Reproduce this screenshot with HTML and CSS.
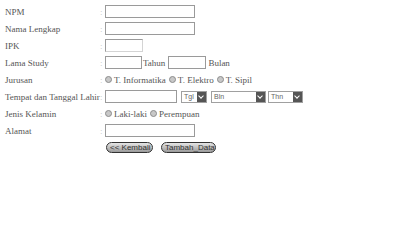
FILE: index.html
```html
<!DOCTYPE html>
<html lang="id">
<head>
    <meta charset="UTF-8">
    <title>Input Data Mahasiswa</title>
    <link rel="stylesheet" href="styles.css">
</head>
<body>
    <form class="form-mhs">
        <div class="label">NPM</div>
        <div class="colon">:</div>
        <div class="field"><span class="textbox w90"></span></div>

        <div class="label">Nama Lengkap</div>
        <div class="colon">:</div>
        <div class="field"><span class="textbox w90"></span></div>

        <div class="label">IPK</div>
        <div class="colon">:</div>
        <div class="field"><span class="textbox w38 inset"></span></div>

        <div class="label">Lama Study</div>
        <div class="colon">:</div>
        <div class="field">
            <span class="textbox w37"></span><span class="word">Tahun</span><span class="textbox w38"></span><span class="word gap">Bulan</span>
        </div>

        <div class="label">Jurusan</div>
        <div class="colon">:</div>
        <div class="field">
            <span class="radio"></span><span class="word">T. Informatika</span>
            <span class="radio"></span><span class="word">T. Elektro</span>
            <span class="radio"></span><span class="word">T. Sipil</span>
        </div>

        <div class="label">Tempat dan Tanggal Lahir</div>
        <div class="colon">:</div>
        <div class="field">
            <span class="textbox w72"></span>
            <span class="select s-tgl"><span class="opt">Tgl</span><span class="arrow"></span></span>
            <span class="select s-bln"><span class="opt">Bln</span><span class="arrow"></span></span>
            <span class="select s-thn"><span class="opt">Thn</span><span class="arrow"></span></span>
        </div>

        <div class="label">Jenis Kelamin</div>
        <div class="colon">:</div>
        <div class="field">
            <span class="radio"></span><span class="word">Laki-laki</span>
            <span class="radio"></span><span class="word">Perempuan</span>
        </div>

        <div class="label">Alamat</div>
        <div class="colon">:</div>
        <div class="field"><span class="textbox w90"></span></div>

        <div class="label"></div>
        <div class="colon"></div>
        <div class="field buttons">
            <span class="btn b-kembali">&lt;&lt; Kembali</span>
            <span class="btn b-tambah">Tambah_Data</span>
        </div>
    </form>
</body>
</html>
```

FILE: styles.css
```css
* {
    margin: 0;
    padding: 0;
    box-sizing: border-box;
}

body {
    background: #ffffff;
    color: #555;
    font-family: 'Liberation Serif', 'Times New Roman', serif;
    font-size: 9px;
    width: 400px;
    height: 225px;
    overflow: hidden;
}

.form-mhs {
    display: grid;
    grid-template-columns: 95px 5px auto;
    grid-auto-rows: 17px;
    align-items: center;
    padding: 3px 0 0 5px;
}

.label {
    white-space: nowrap;
}

.colon {
    color: #c4c4c4;
}

.field {
    display: flex;
    align-items: center;
    white-space: nowrap;
}

.textbox {
    display: inline-block;
    height: 13px;
    border: 1px solid #9a9a9a;
    background: #fff;
}

.textbox.inset {
    border-color: #9a9a9a #d4d4d4 #d4d4d4 #9a9a9a;
}

.w90 { width: 90px; }
.w72 { width: 72px; }
.w38 { width: 38px; }
.w37 { width: 37px; }

.word {
    margin: 0 3px 0 1px;
}

.word.gap {
    margin-left: 2px;
}

.radio {
    display: inline-block;
    width: 7px;
    height: 7px;
    border-radius: 50%;
    background: #c8c8c8;
    border: 1px solid #8c8c8c;
    margin-right: 1px;
}

.select {
    display: inline-flex;
    align-items: center;
    height: 12px;
    border: 1px solid #a0a0a0;
    background: #fff;
    margin-left: 4px;
    font-family: 'Liberation Sans', Arial, sans-serif;
    font-size: 7px;
    color: #666;
}

.select .opt {
    flex: 1;
    padding-left: 2px;
}

.select .arrow {
    width: 9px;
    height: 10px;
    background: #555;
    position: relative;
}

.select .arrow::after {
    content: '';
    position: absolute;
    left: 2px;
    top: 2px;
    width: 3px;
    height: 3px;
    border-right: 1px solid #fff;
    border-bottom: 1px solid #fff;
    transform: rotate(45deg);
}

.s-tgl { width: 26px; }
.s-bln { width: 55px; margin-left: 4px; }
.s-thn { width: 35px; margin-left: 2px; }

.buttons {
    padding-left: 1px;
}

.btn {
    display: inline-block;
    height: 11px;
    line-height: 9px;
    padding: 0 3px;
    border: 1px solid #333;
    border-radius: 6px;
    background: linear-gradient(to bottom, #e6e6e6, #9a9a9a);
    font-family: 'Liberation Sans', Arial, sans-serif;
    font-size: 8px;
    color: #333;
    white-space: nowrap;
    overflow: hidden;
}

.b-kembali { width: 47px; }
.b-tambah { width: 55px; margin-left: 8px; }
```
